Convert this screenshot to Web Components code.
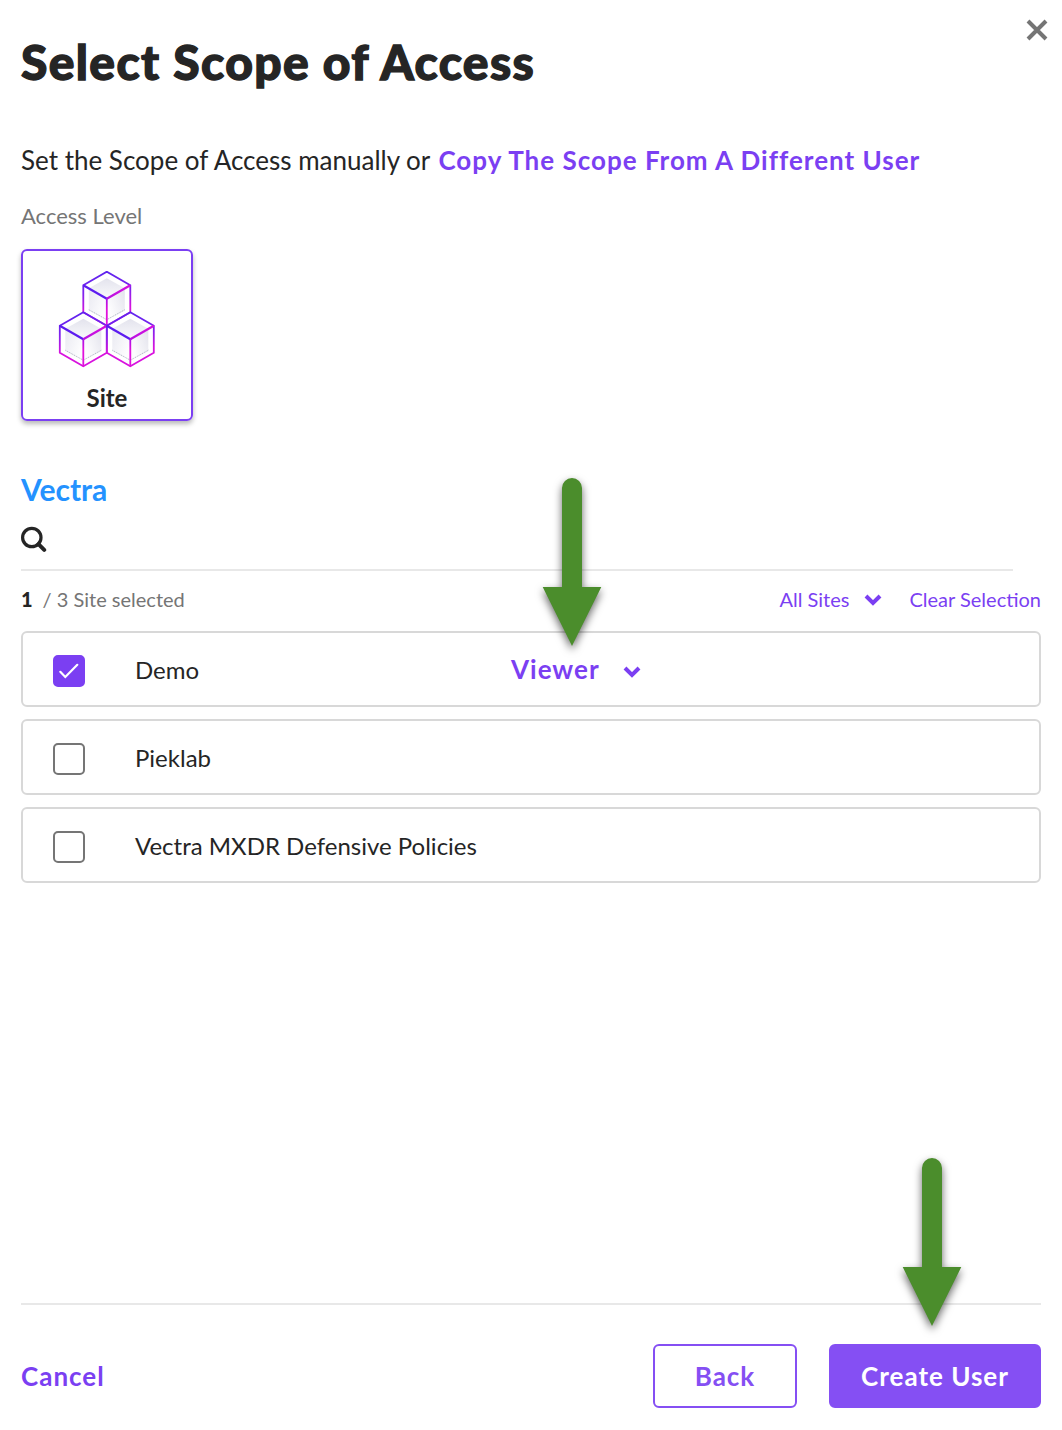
<!DOCTYPE html>
<html lang="en">
<head>
<meta charset="utf-8">
<title>Select Scope of Access</title>
<style>
  html, body {
    margin: 0;
    padding: 0;
  }
  body {
    background: #fff;
    color: #252525;
    font-family: Lato, 'Liberation Sans', sans-serif;
    --purple: #7b3ff2;
    --purple-button: #854ff3;
    --grey: #757575;
    --line: #e8e8e8;
  }
</style>
</head>
<body>
<scope-dialog heading="Select Scope of Access">
  <scope-intro>Set the Scope of Access manually or <link-button slot="action">Copy The Scope From A Different User</link-button></scope-intro>
  <access-level label="Access Level">
    <level-card>Site</level-card>
  </access-level>
  <site-search account="Vectra"></site-search>
  <selection-bar selected="1" total="/ 3 Site selected"></selection-bar>
  <site-list>
    <site-row checked role-name="Viewer">Demo</site-row>
    <site-row>Pieklab</site-row>
    <site-row>Vectra MXDR Defensive Policies</site-row>
  </site-list>
  <link-button slot="cancel">Cancel</link-button>
  <action-button slot="actions">Back</action-button>
  <action-button slot="actions" primary>Create User</action-button>
</scope-dialog>
<pointer-arrow style="left: 531px; top: 466px"></pointer-arrow>
<pointer-arrow style="left: 891px; top: 1146px"></pointer-arrow>

<script>
class BaseElement extends HTMLElement {
    connectedCallback() {
        if (this.shadowRoot) return;
        this.attachShadow({ mode: 'open' }).innerHTML = this.render();
    }
}

class ScopeDialog extends BaseElement {
    render() {
        return `
          <style>
            :host {
              display: flex;
              flex-direction: column;
              height: 1430px;
              padding: 0 21px 22px;
              box-sizing: border-box;
            }
            header {
              display: flex;
              justify-content: space-between;
              align-items: flex-start;
              margin-right: -7px;
              height: 144px;
            }
            h1 {
              margin: 32px 0 0;
              font-size: 48px;
              font-weight: 900;
              line-height: 60px;
              letter-spacing: 1.35px;
              white-space: nowrap;
              -webkit-text-stroke: 1.3px #252525;
            }
            .close {
              margin-top: 19px;
            }
            footer {
              display: flex;
              align-items: center;
              gap: 32px;
              margin-top: auto;
              padding-top: 39px;
              border-top: 2px solid var(--line);
            }
            .spacer {
              flex: 1;
            }
          </style>
          <header>
            <h1>${this.getAttribute('heading')}</h1>
            <svg class="close" width="22" height="22" viewBox="0 0 22 22">
              <path d="M2 2 20 20M20 2 2 20" fill="none" stroke="#757575" stroke-width="4"/>
            </svg>
          </header>
          <slot></slot>
          <footer>
            <slot name="cancel"></slot>
            <span class="spacer"></span>
            <slot name="actions"></slot>
          </footer>
        `;
    }
}

class ScopeIntro extends BaseElement {
    render() {
        return `
          <style>
            :host {
              display: block;
              font-size: 26px;
              line-height: 32px;
              white-space: nowrap;
            }
            ::slotted(link-button) {
              margin-left: 2px;
            }
          </style>
          <slot></slot><slot name="action"></slot>
        `;
    }
}

class LinkButton extends BaseElement {
    render() {
        return `
          <style>
            :host {
              display: inline-block;
              color: var(--purple);
              font-size: 26px;
              font-weight: 700;
              line-height: 32px;
              letter-spacing: 1px;
              cursor: pointer;
            }
          </style>
          <slot></slot>
        `;
    }
}

class ActionButton extends BaseElement {
    render() {
        return `
          <style>
            :host {
              display: block;
              box-sizing: border-box;
              height: 64px;
              min-width: 144px;
              padding: 0 29px;
              border: 2px solid var(--purple-button);
              border-radius: 6px;
              color: var(--purple-button);
              font-size: 26px;
              font-weight: 700;
              line-height: 60px;
              letter-spacing: 1px;
              text-align: center;
              cursor: pointer;
            }
            :host([primary]) {
              min-width: 212px;
              background: var(--purple-button);
              color: #fff;
            }
          </style>
          <slot></slot>
        `;
    }
}

class AccessLevel extends BaseElement {
    render() {
        return `
          <style>
            :host {
              display: block;
              margin-top: 26px;
            }
            label {
              display: block;
              margin-bottom: 19px;
              color: var(--grey);
              font-size: 22px;
              line-height: 28px;
            }
          </style>
          <label>${this.getAttribute('label')}</label>
          <slot></slot>
        `;
    }
}

class LevelCard extends BaseElement {
    // one isometric cube whose top vertex is at (x, y)
    cube(x, y) {
        return `
          <g transform="translate(${x} ${y})">
            <path d="M0 6.5 18 16.5 0 27-18 16.5Z" fill="url(#top)"/>
            <path d="M-18 16.5 0 27V49L-18 39Z" fill="url(#left)"/>
            <path d="M18 16.5 0 27V49L18 39Z" fill="url(#right)"/>
            <path d="M-18 38 0 48 18 38" fill="none" stroke="#b4bac6" stroke-width="1" stroke-dasharray="1.2 .8"/>
            <path d="M-23.5 40.5V13.5L0 0 23.5 13.5V40.5L0 54Z" fill="none" stroke="url(#edge)" stroke-width="1.8"/>
            <path d="M-23.5 13.5 0 27" stroke="#5d1cf0" stroke-width="2.2"/>
            <path d="M0 27 23.5 13.5" stroke="url(#across)" stroke-width="2.2"/>
            <path d="M-.9 27H.9V54H-.9Z" fill="url(#down)"/>
          </g>
        `;
    }
    render() {
        return `
          <style>
            :host {
              display: flex;
              flex-direction: column;
              align-items: center;
              box-sizing: border-box;
              width: 172px;
              height: 172px;
              padding-top: 20px;
              border: 2px solid var(--purple);
              border-radius: 6px;
              box-shadow: 0 3px 5px rgba(0, 0, 0, .28);
              font-size: 24px;
              font-weight: 700;
              line-height: 30px;
            }
            svg {
              margin-bottom: 12px;
            }
          </style>
          <svg width="100" height="100" viewBox="0 0 100 100">
            <defs>
              <linearGradient id="edge" x1="0" y1="0" x2=".1" y2="1">
                <stop offset="0" stop-color="#5a24ee"/>
                <stop offset=".4" stop-color="#7d22ee"/>
                <stop offset=".75" stop-color="#d812de"/>
              </linearGradient>
              <linearGradient id="across">
                <stop offset="0" stop-color="#b812e2"/>
                <stop offset="1" stop-color="#d80fdc"/>
              </linearGradient>
              <linearGradient id="down" x1="0" y1="0" x2="0" y2="1">
                <stop offset="0" stop-color="#a812e6"/>
                <stop offset=".4" stop-color="#e010dc"/>
              </linearGradient>
              <linearGradient id="top" x1="0" y1="0" x2="0" y2="1">
                <stop offset="0" stop-color="#e3e3ed"/>
                <stop offset="1" stop-color="#fafafc"/>
              </linearGradient>
              <linearGradient id="left" x1="0" y1="0" x2=".9" y2=".6">
                <stop offset="0" stop-color="#e9e9f1"/>
                <stop offset="1" stop-color="#fdfdfe"/>
              </linearGradient>
              <linearGradient id="right" x1="1" y1="0" x2=".1" y2=".6">
                <stop offset="0" stop-color="#e3e3ec"/>
                <stop offset="1" stop-color="#fdfdfe"/>
              </linearGradient>
            </defs>
            ${this.cube(49.8, .7)}
            ${this.cube(26.3, 41.2)}
            ${this.cube(73.3, 41.2)}
          </svg>
          <slot></slot>
        `;
    }
}

class SiteSearch extends BaseElement {
    render() {
        return `
          <style>
            :host {
              display: block;
              margin-top: 50px;
            }
            h2 {
              margin: 0;
              color: #2492ff;
              font-size: 30px;
              font-weight: 700;
              line-height: 36px;
            }
            .field {
              display: flex;
              align-items: flex-start;
              box-sizing: border-box;
              width: 992px;
              height: 64px;
              padding-top: 19px;
              border-bottom: 2px solid var(--line);
            }
          </style>
          <h2>${this.getAttribute('account')}</h2>
          <div class="field">
            <svg width="26" height="27" viewBox="0 0 26 27">
              <circle cx="10.8" cy="11.5" r="9.2" fill="none" stroke="#252525" stroke-width="3.2"/>
              <path d="M17.5 18.2 23.2 23.9" stroke="#252525" stroke-width="4" stroke-linecap="round"/>
            </svg>
          </div>
        `;
    }
}

class ChevronIcon extends BaseElement {
    render() {
        return `
          <style>
            :host {
              display: block;
              width: 18px;
              height: 12px;
            }
            svg {
              display: block;
            }
          </style>
          <svg width="18" height="12" viewBox="0 0 18 12">
            <path d="M2 2 9 9 16 2" fill="none" stroke="#7b3ff2" stroke-width="4"/>
          </svg>
        `;
    }
}

class SelectionBar extends BaseElement {
    render() {
        return `
          <style>
            :host {
              display: flex;
              margin-top: 16px;
              color: var(--purple);
              font-size: 20px;
              line-height: 24px;
            }
            b {
              margin-right: 10px;
              color: #252525;
              font-weight: 900;
            }
            .total {
              flex: 1;
              color: var(--grey);
            }
            chevron-icon {
              margin: 7px 27px 0 15px;
            }
          </style>
          <b>${this.getAttribute('selected')}</b>
          <span class="total">${this.getAttribute('total')}</span>
          <span>All Sites</span>
          <chevron-icon></chevron-icon>
          <span>Clear Selection</span>
        `;
    }
}

class SiteList extends BaseElement {
    render() {
        return `
          <style>
            :host {
              display: flex;
              flex-direction: column;
              gap: 12px;
              margin-top: 20px;
            }
          </style>
          <slot></slot>
        `;
    }
}

class SiteRow extends BaseElement {
    render() {
        const role = this.getAttribute('role-name');
        const tick = this.hasAttribute('checked')
            ? '<svg width="28" height="28" viewBox="0 0 28 28"><path d="M5.3 14.8 10.3 20 22.3 7.8" fill="none" stroke="#fff" stroke-width="2.2" stroke-linecap="round"/></svg>'
            : '';
        return `
          <style>
            :host {
              display: grid;
              grid-template-columns: 82px 376px 1fr;
              align-items: start;
              box-sizing: border-box;
              height: 76px;
              padding: 22px 30px 0;
              border: 2px solid #d8d8d8;
              border-radius: 6px;
              font-size: 24px;
              line-height: 30px;
            }
            .box {
              box-sizing: border-box;
              width: 32px;
              height: 32px;
              border: 2px solid var(--grey);
              border-radius: 5px;
            }
            :host([checked]) .box {
              border-color: var(--purple);
              background: var(--purple);
            }
            .box svg {
              display: block;
            }
            .role {
              display: flex;
              align-items: center;
              gap: 23px;
              margin-top: -2px;
            }
            chevron-icon {
              margin-top: 6px;
            }
          </style>
          <div class="box">${tick}</div>
          <span><slot></slot></span>
          ${role ? `<div class="role"><link-button>${role}</link-button><chevron-icon></chevron-icon></div>` : ''}
        `;
    }
}

class PointerArrow extends BaseElement {
    render() {
        return `
          <style>
            :host {
              position: absolute;
              width: 82px;
              height: 196px;
              pointer-events: none;
            }
            svg {
              display: block;
              filter: drop-shadow(0 4px 4px rgba(0, 0, 0, .6));
            }
          </style>
          <svg width="82" height="196" viewBox="0 0 82 196">
            <path d="M31 22A10 10 0 0 1 51 22V121H70.3L41 180 11.7 121H31Z" fill="#4b8d2c"/>
          </svg>
        `;
    }
}

customElements.define('scope-dialog', ScopeDialog);
customElements.define('scope-intro', ScopeIntro);
customElements.define('link-button', LinkButton);
customElements.define('action-button', ActionButton);
customElements.define('access-level', AccessLevel);
customElements.define('level-card', LevelCard);
customElements.define('site-search', SiteSearch);
customElements.define('chevron-icon', ChevronIcon);
customElements.define('selection-bar', SelectionBar);
customElements.define('site-list', SiteList);
customElements.define('site-row', SiteRow);
customElements.define('pointer-arrow', PointerArrow);
</script>
</body>
</html>
